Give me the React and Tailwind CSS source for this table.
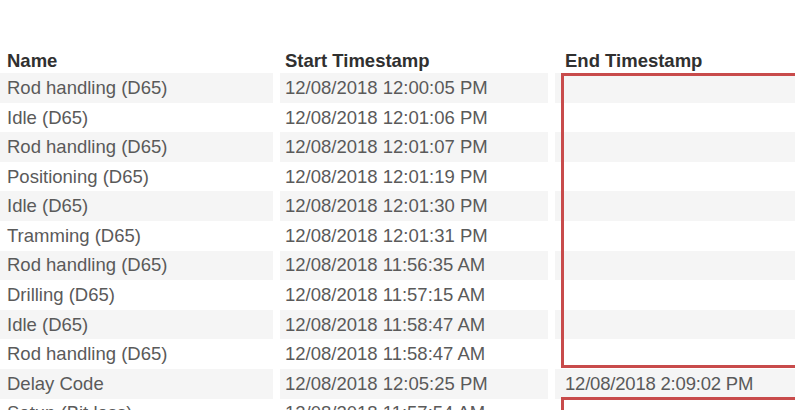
import React from "react";

const rows = [
  ["Rod handling (D65)", "12/08/2018 12:00:05 PM", ""],
  ["Idle (D65)", "12/08/2018 12:01:06 PM", ""],
  ["Rod handling (D65)", "12/08/2018 12:01:07 PM", ""],
  ["Positioning (D65)", "12/08/2018 12:01:19 PM", ""],
  ["Idle (D65)", "12/08/2018 12:01:30 PM", ""],
  ["Tramming (D65)", "12/08/2018 12:01:31 PM", ""],
  ["Rod handling (D65)", "12/08/2018 11:56:35 AM", ""],
  ["Drilling (D65)", "12/08/2018 11:57:15 AM", ""],
  ["Idle (D65)", "12/08/2018 11:58:47 AM", ""],
  ["Rod handling (D65)", "12/08/2018 11:58:47 AM", ""],
  ["Delay Code", "12/08/2018 12:05:25 PM", "12/08/2018 2:09:02 PM"],
  ["Setup (Bit loss)", "12/08/2018 11:57:54 AM", ""],
];

export default function App() {
  return (
    <div
      className="relative w-[795px] h-[410px] overflow-hidden bg-white pt-[47px]"
      style={{ fontFamily: '"Liberation Sans", Arial, sans-serif' }}
    >
      <div className="grid grid-cols-[273px_268px_247px] gap-x-[7px] h-[26px] items-center text-[18.5px] font-bold text-[#303030]">
        <div className="pl-[7px]">Name</div>
        <div className="pl-[5px]">Start Timestamp</div>
        <div className="pl-[10px]">End Timestamp</div>
      </div>
      {rows.map((r, i) => {
        const bg = i % 2 === 0 ? "bg-[#f5f5f5]" : "bg-white";
        return (
          <div
            key={i}
            className="grid grid-cols-[273px_268px_247px] gap-x-[7px] h-[29.6px] text-[18.5px] text-[#5a5a5a]"
          >
            <div className={`${bg} pl-[7px] flex items-center`}>{r[0]}</div>
            <div className={`${bg} pl-[5px] flex items-center`}>{r[1]}</div>
            <div className={`${bg} pl-[10px] flex items-center tracking-[-0.2px]`}>{r[2]}</div>
          </div>
        );
      })}
      <div className="absolute left-[561px] top-[73px] w-[250px] h-[295px] border-[3px] border-[#c84b4b]" />
      <div className="absolute left-[561px] top-[397px] w-[250px] h-[60px] border-[3px] border-[#c84b4b]" />
    </div>
  );
}
